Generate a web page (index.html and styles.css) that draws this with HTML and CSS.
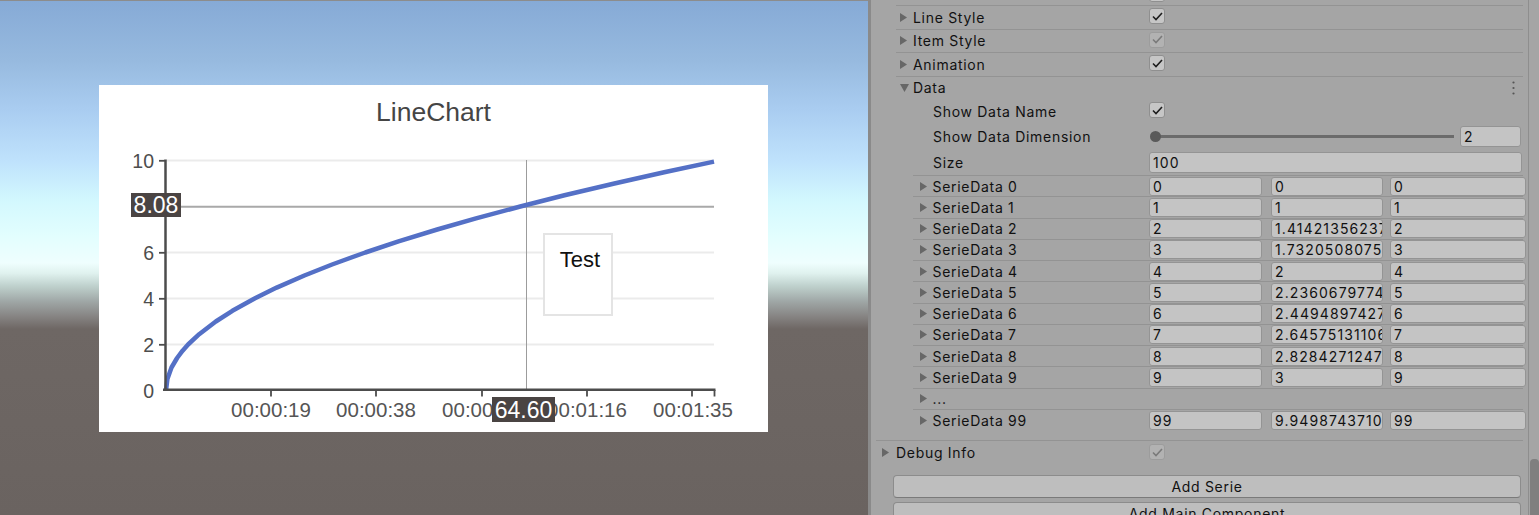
FILE: index.html
```html
<!DOCTYPE html>
<html>
<head>
<meta charset="utf-8">
<link rel="stylesheet" href="styles.css">
</head>
<body>
<div class="app">
  <div class="scene">
    <div class="chart-card">
      <svg class="chart" viewBox="99 85 669 347" width="669" height="347">
        <text class="title" x="433.5" y="121" text-anchor="middle">LineChart</text>
        <g class="grid">
          <line x1="166" y1="160.5" x2="714" y2="160.5"/>
          <line x1="166" y1="252.5" x2="714" y2="252.5"/>
          <line x1="166" y1="298.5" x2="714" y2="298.5"/>
          <line x1="166" y1="344.5" x2="714" y2="344.5"/>
        </g>
        <line class="cross-h" x1="166" y1="206.7" x2="714" y2="206.7"/>
        <line class="cross-v" x1="526.5" y1="160" x2="526.5" y2="390"/>
        <rect class="tip" x="544" y="234" width="68" height="81"/>
        <text class="tip-text" x="580" y="266.5" text-anchor="middle">Test</text>
        <polyline class="curve" points="166,390.5 167.4,379 171.5,367.5 177.1,358 182.6,350.7 188.1,344.5 199.2,334.2 215.8,321.5 232.4,310.8 254.6,298.5 276.7,287.6 304.4,275.5 332.1,264.5 365.3,252.5 398.5,241.4 437.2,229.5 476,218.4 520.3,206.5 564.5,195.3 614.4,183.5 664.2,172.3 714,161.6"/>
        <g class="axis">
          <line x1="165.5" y1="159.5" x2="165.5" y2="391"/>
          <line x1="163" y1="389.8" x2="715.5" y2="389.8"/>
        </g>
        <g class="ticks">
          <line x1="159" y1="160.8" x2="165" y2="160.8"/>
          <line x1="159" y1="206.8" x2="165" y2="206.8"/>
          <line x1="159" y1="252.8" x2="165" y2="252.8"/>
          <line x1="159" y1="298.8" x2="165" y2="298.8"/>
          <line x1="159" y1="344.8" x2="165" y2="344.8"/>
          <line x1="271" y1="390" x2="271" y2="396.5"/>
          <line x1="376" y1="390" x2="376" y2="396.5"/>
          <line x1="482" y1="390" x2="482" y2="396.5"/>
          <line x1="587" y1="390" x2="587" y2="396.5"/>
          <line x1="692" y1="390" x2="692" y2="396.5"/>
          <line x1="714.5" y1="390" x2="714.5" y2="396.5"/>
        </g>
        <g class="ylab" text-anchor="end">
          <text x="154" y="168">10</text>
          <text x="154" y="260">6</text>
          <text x="154" y="306">4</text>
          <text x="154" y="352">2</text>
          <text x="154" y="398">0</text>
        </g>
        <g class="xlab" text-anchor="middle">
          <text x="271" y="416.5">00:00:19</text>
          <text x="376" y="416.5">00:00:38</text>
          <text x="482" y="416.5">00:00:57</text>
          <text x="587" y="416.5">00:01:16</text>
          <text x="693" y="416.5">00:01:35</text>
        </g>
        <rect class="lab-bg" x="131" y="193" width="50" height="24"/>
        <text class="lab-text" x="156" y="213.3" text-anchor="middle">8.08</text>
        <rect class="lab-bg" x="492" y="397" width="63" height="25"/>
        <text class="lab-text" x="523.5" y="418" text-anchor="middle">64.60</text>
      </svg>
    </div>
  </div>
  <div class="divider"></div>
  <div class="inspector">
    <div class="content">
      <div class="serie">
        <div class="row r-cut sep">
          <div class="lbl"></div>
          <span class="cb cut"><svg viewBox="0 0 11 9"><polyline class="ck" points="1,4.5 4,7.5 10,1"/></svg></span>
        </div>
        <div class="row r24 sep">
          <div class="lbl"><svg class="arrow" viewBox="0 0 7 9"><polygon points="0,0 7,4.5 0,9"/></svg>Line Style</div>
          <span class="cb"><svg viewBox="0 0 11 9"><polyline class="ck" points="1,4.5 4,7.5 10,1"/></svg></span>
        </div>
        <div class="row r23 sep">
          <div class="lbl"><svg class="arrow" viewBox="0 0 7 9"><polygon points="0,0 7,4.5 0,9"/></svg>Item Style</div>
          <span class="cb dis"><svg viewBox="0 0 11 9"><polyline class="ck" points="1,4.5 4,7.5 10,1"/></svg></span>
        </div>
        <div class="row r24 sep">
          <div class="lbl"><svg class="arrow" viewBox="0 0 7 9"><polygon points="0,0 7,4.5 0,9"/></svg>Animation</div>
          <span class="cb"><svg viewBox="0 0 11 9"><polyline class="ck" points="1,4.5 4,7.5 10,1"/></svg></span>
        </div>
        <div class="row r22">
          <div class="lbl"><svg class="arrow down" viewBox="0 0 9 8"><polygon points="0,0 9,0 4.5,8"/></svg>Data</div>
          <div class="spacer"></div>
          <svg class="menu" viewBox="0 0 3 14"><circle cx="1.5" cy="1.5" r="1.1"/><circle cx="1.5" cy="7" r="1.1"/><circle cx="1.5" cy="12.5" r="1.1"/></svg>
        </div>
        <div class="data">
          <div class="row r25">
            <div class="lbl plain">Show Data Name</div>
            <span class="cb"><svg viewBox="0 0 11 9"><polyline class="ck" points="1,4.5 4,7.5 10,1"/></svg></span>
          </div>
          <div class="row r25">
            <div class="lbl plain">Show Data Dimension</div>
            <div class="slider"><span class="knob"></span><span class="track"></span></div>
            <div class="field int">2</div>
          </div>
          <div class="row r27 sep">
            <div class="lbl plain">Size</div>
            <div class="field size">100</div>
          </div>
          <div class="row sd sep">
            <div class="lbl"><svg class="arrow" viewBox="0 0 7 9"><polygon points="0,0 7,4.5 0,9"/></svg>SerieData 0</div>
            <div class="field f1">0</div><div class="field f2">0</div><div class="field f3">0</div>
          </div>
          <div class="row sd sep">
            <div class="lbl"><svg class="arrow" viewBox="0 0 7 9"><polygon points="0,0 7,4.5 0,9"/></svg>SerieData 1</div>
            <div class="field f1">1</div><div class="field f2">1</div><div class="field f3">1</div>
          </div>
          <div class="row sd sep">
            <div class="lbl"><svg class="arrow" viewBox="0 0 7 9"><polygon points="0,0 7,4.5 0,9"/></svg>SerieData 2</div>
            <div class="field f1">2</div><div class="field f2">1.41421356237</div><div class="field f3">2</div>
          </div>
          <div class="row sd sep">
            <div class="lbl"><svg class="arrow" viewBox="0 0 7 9"><polygon points="0,0 7,4.5 0,9"/></svg>SerieData 3</div>
            <div class="field f1">3</div><div class="field f2">1.73205080756</div><div class="field f3">3</div>
          </div>
          <div class="row sd sep">
            <div class="lbl"><svg class="arrow" viewBox="0 0 7 9"><polygon points="0,0 7,4.5 0,9"/></svg>SerieData 4</div>
            <div class="field f1">4</div><div class="field f2">2</div><div class="field f3">4</div>
          </div>
          <div class="row sd sep">
            <div class="lbl"><svg class="arrow" viewBox="0 0 7 9"><polygon points="0,0 7,4.5 0,9"/></svg>SerieData 5</div>
            <div class="field f1">5</div><div class="field f2">2.23606797749</div><div class="field f3">5</div>
          </div>
          <div class="row sd sep">
            <div class="lbl"><svg class="arrow" viewBox="0 0 7 9"><polygon points="0,0 7,4.5 0,9"/></svg>SerieData 6</div>
            <div class="field f1">6</div><div class="field f2">2.44948974278</div><div class="field f3">6</div>
          </div>
          <div class="row sd sep">
            <div class="lbl"><svg class="arrow" viewBox="0 0 7 9"><polygon points="0,0 7,4.5 0,9"/></svg>SerieData 7</div>
            <div class="field f1">7</div><div class="field f2">2.64575131106</div><div class="field f3">7</div>
          </div>
          <div class="row sd sep">
            <div class="lbl"><svg class="arrow" viewBox="0 0 7 9"><polygon points="0,0 7,4.5 0,9"/></svg>SerieData 8</div>
            <div class="field f1">8</div><div class="field f2">2.82842712474</div><div class="field f3">8</div>
          </div>
          <div class="row sd sep">
            <div class="lbl"><svg class="arrow" viewBox="0 0 7 9"><polygon points="0,0 7,4.5 0,9"/></svg>SerieData 9</div>
            <div class="field f1">9</div><div class="field f2">3</div><div class="field f3">9</div>
          </div>
          <div class="row sd sep">
            <div class="lbl"><svg class="arrow" viewBox="0 0 7 9"><polygon points="0,0 7,4.5 0,9"/></svg>...</div>
          </div>
          <div class="row sd">
            <div class="lbl"><svg class="arrow" viewBox="0 0 7 9"><polygon points="0,0 7,4.5 0,9"/></svg>SerieData 99</div>
            <div class="field f1">99</div><div class="field f2">9.94987437106</div><div class="field f3">99</div>
          </div>
        </div>
      </div>
      <div class="row debug">
        <div class="lbl"><svg class="arrow" viewBox="0 0 7 9"><polygon points="0,0 7,4.5 0,9"/></svg>Debug Info</div>
        <span class="cb dis"><svg viewBox="0 0 11 9"><polyline class="ck" points="1,4.5 4,7.5 10,1"/></svg></span>
      </div>
      <div class="btns">
        <div class="btn">Add Serie</div>
        <div class="btn">Add Main Component</div>
      </div>
    </div>
    <div class="scroll"><div class="thumb"></div></div>
  </div>
</div>
</body>
</html>
```
FILE: styles.css
```css
* { box-sizing: border-box; }
html, body { margin: 0; padding: 0; }
body {
  width: 1539px;
  height: 515px;
  overflow: hidden;
  font-family: Inter, "Noto Sans", sans-serif;
  background: #a5a5a5;
}
.app { display: flex; height: 515px; }

/* scene */
.scene {
  width: 868px;
  flex: none;
  border-top: 1px solid #8c8c8c;
  padding: 84px 0 0 99px;
  background: linear-gradient(to bottom,
    #86aad6 0px, #97badf 60px, #aacdf1 110px, #bfe2fc 160px,
    #d3f8fe 200px, #e2fefe 235px, #effefe 262px, #e0f2ef 272px,
    #bfd1cd 285px, #a0a8a7 300px, #878584 315px, #6e6764 328px,
    #6a6360 515px);
}
.chart-card { width: 669px; height: 347px; background: #fff; }
.chart { display: block; font-family: "Liberation Sans", Arial, sans-serif; }
.chart .title { font-size: 26.5px; fill: #454545; }
.chart .grid line { stroke: #ebebeb; stroke-width: 2; }
.chart .cross-h { stroke: #a9a9a9; stroke-width: 2; }
.chart .cross-v { stroke: #9c9c9c; stroke-width: 1; }
.chart .tip { fill: #fff; stroke: #e4e4e4; stroke-width: 2; }
.chart .tip-text { font-size: 22px; fill: #111; }
.chart .curve { fill: none; stroke: #5470c6; stroke-width: 4.5; stroke-linejoin: round; stroke-linecap: butt; }
.chart .axis line { stroke: #4c4c4c; stroke-width: 2.5; }
.chart .ticks line { stroke: #4c4c4c; stroke-width: 1.8; }
.chart .ylab { font-size: 19.5px; fill: #4d4d4d; }
.chart .xlab { font-size: 20.5px; fill: #555; }
.chart .lab-bg { fill: #4a4443; }
.chart .lab-text { font-size: 23px; fill: #fff; }

.divider { width: 3px; flex: none; background: #8a8a8a; }

/* inspector */
.inspector {
  flex: 1;
  display: flex;
  background: #a5a5a5;
  color: #111;
  font-size: 14px;
  letter-spacing: 0.7px;
  overflow: hidden;
}
.content { flex: 1; padding: 0 5px; min-width: 0; }
.scroll {
  width: 11px;
  flex: none;
  border-left: 1px solid #8e8e8e;
  padding-left: 1px;
  display: flex;
  flex-direction: column;
  justify-content: flex-end;
}
.thumb { height: 56px; background: #7f7f7f; border-radius: 4px 4px 0 0; }

.serie { margin-left: 20px; }
.row { display: flex; align-items: center; white-space: nowrap; }
.sep { border-bottom: 1px solid #939393; }
.r-cut { height: 6px; align-items: flex-start; overflow: hidden; }
.r22 { height: 22px; }
.r23 { height: 23px; }
.r24 { height: 24px; }
.r25 { height: 25px; }
.r27 { height: 27px; }
.sd { height: 21.25px; }

.lbl { display: flex; align-items: center; width: 253px; flex: none; }
.r24 .lbl, .r23 .lbl, .r22 .lbl { padding-bottom: 1px; }
.arrow { width: 7px; height: 9px; margin: 0 6px 0 4px; fill: #676767; flex: none; }
.arrow.down { width: 9px; height: 8px; margin: 0 4px 0 4px; }
.spacer { flex: 1; }
.menu { width: 3px; height: 14px; margin-right: 8px; fill: #555; }

.cb {
  width: 16px; height: 16px;
  border: 1px solid #8f8f8f;
  border-radius: 3px;
  background: #c6c6c6;
  display: flex; align-items: center; justify-content: center;
  margin-bottom: 3px;
  flex: none;
}
.cb svg { width: 11px; height: 9px; }
.cb .ck { fill: none; stroke: #1e1e1e; stroke-width: 1.6; }
.cb.dis { background: #b2b2b2; border-color: #9c9c9c; }
.cb.dis .ck { stroke: #7a7a7a; }
.cb.cut { margin-top: -14px; margin-bottom: 0; }

.data { margin-left: 17px; }
.data .lbl { width: 236px; }
.plain { padding-left: 20px; }
.sd .arrow { margin: 0 6px 0 6.5px; }

.field {
  height: 21px;
  background: #c4c4c4;
  border: 1px solid #949494;
  border-radius: 3px;
  padding: 0 3px;
  display: flex; align-items: center;
  overflow: hidden;
  white-space: nowrap;
  flex: none;
  letter-spacing: 1.1px;
}
.size { flex: 1; margin-right: 1px; }
.int { width: 61px; margin: 0 2px 0 6.5px; }
.sd .field { height: 19px; }
.f1 { width: 113px; margin-right: 9px; }
.f2 { width: 112px; margin-right: 7px; }
.f3 { width: 136px; margin-right: -3px; }

.slider { flex: 1; display: flex; align-items: center; margin-left: 1px; }
.knob {
  width: 11px; height: 11px; border-radius: 50%;
  background: #5a5a5a; flex: none;
  position: relative; z-index: 1;
}
.track { flex: 1; height: 3px; background: #6b6b6b; margin-left: -5.5px; }

.debug {
  height: 24px;
  margin-top: 9px;
  border-top: 1px solid #939393;
}
.debug .lbl { width: 273px; }
.debug .arrow { margin: 0 7.5px 0 5.5px; }
.debug .cb { margin-bottom: 1px; }

.btns { margin: 11px 2px 0 17px; display: flex; flex-direction: column; gap: 4px; }
.btn {
  height: 23px; flex: none;
  background: #bebebe;
  border: 1px solid #8c8c8c;
  border-bottom-color: #7a7a7a;
  border-radius: 4px;
  display: flex; align-items: center; justify-content: center;
}
```
